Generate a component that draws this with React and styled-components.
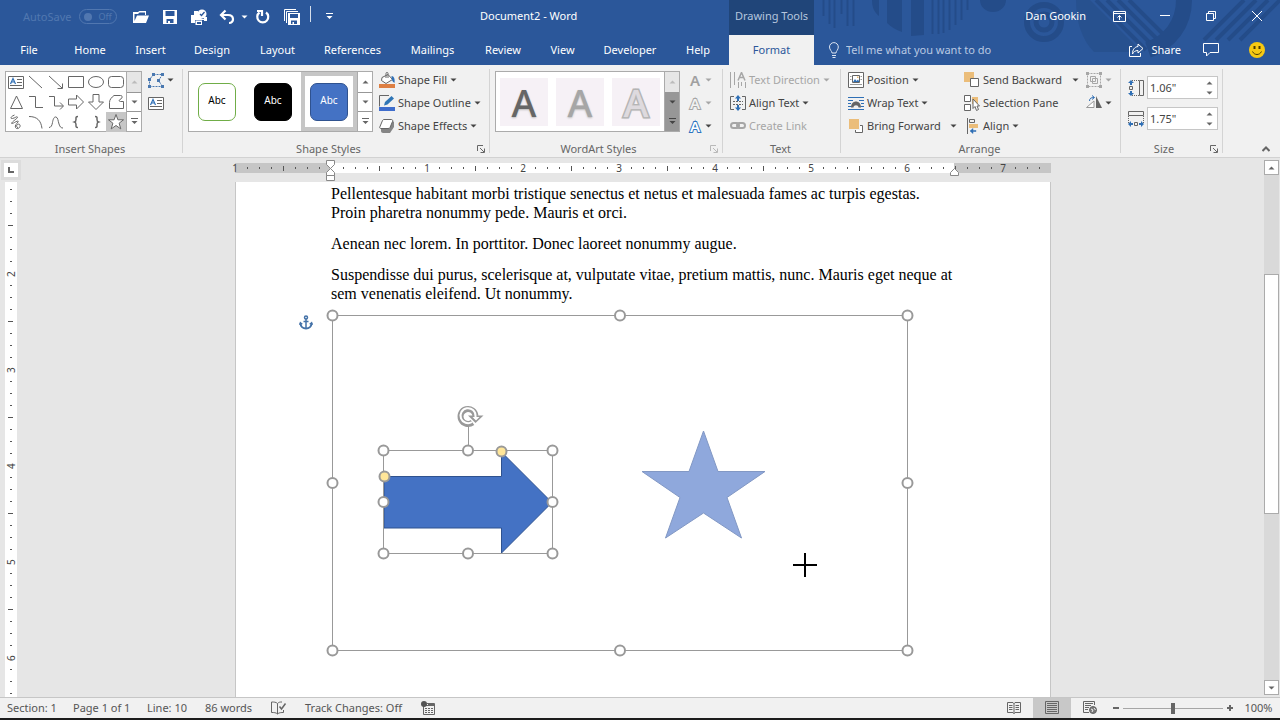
import React from 'react';
import styled, {createGlobalStyle, css} from 'styled-components';

const GlobalStyle = createGlobalStyle`
  * {
    box-sizing: border-box;
  }

  body {
    margin: 0;
    font-family: 'Noto Sans', 'Open Sans', sans-serif;
    font-size: 11px;
    line-height: 16px;
    color: #444;
  }

  button,
  input {
    font: inherit;
    color: inherit;
  }

  button {
    margin: 0;
    padding: 0;
    border: none;
    background: none;
  }

  svg {
    display: block;
    flex: none;
  }
`;

const Window = styled.div`
  display: flex;
  flex-direction: column;
  height: 100vh;
  overflow: hidden;
  background: #e6e6e6;
`;

/* ---------- header ---------- */

const Header = styled.header`
  position: relative;
  flex: none;
  background: #2b579a;
  color: #fff;
`;

const Pattern = styled.svg`
  position: absolute;
  top: 0;
  right: 0;
`;

const TitleBar = styled.div`
  position: relative;
  display: flex;
  height: 35px;
`;

const QuickAccess = styled.div`
  display: flex;
  align-items: center;
  flex: none;
  width: 452px;
  height: 33px;
  padding-left: 23px;
`;

const AutoSave = styled.label`
  display: flex;
  align-items: center;
  gap: 8px;
  width: 103px;
  color: #5177b0;
`;

const Toggle = styled.button`
  display: flex;
  align-items: center;
  gap: 6px;
  width: 38px;
  height: 15px;
  padding-left: 4px;
  border: 1px solid #5177b0;
  border-radius: 8px;
  font-size: 9px;
  line-height: 12px;

  &::before {
    content: '';
    width: 8px;
    height: 8px;
    border-radius: 50%;
    background: #5177b0;
  }
`;

const QuickButton = styled.button`
  display: flex;
  align-items: center;
  justify-content: center;
  width: ${(p) => p.$width || 29}px;
  height: 24px;
`;

const Divider = styled.span`
  width: 1px;
  height: 16px;
  margin: 0 7px 6px 4px;
  background: #d5deeb;
`;

const Title = styled.h1`
  flex: none;
  width: 277px;
  margin: 0;
  padding: 8px 0 0 28px;
  font-size: 11px;
  font-weight: 400;
`;

const ContextLabel = styled.div`
  flex: none;
  width: 85px;
  padding-top: 8px;
  background: #204579;
  color: #b5c5de;
  text-align: center;
`;

const WindowControls = styled.div`
  display: flex;
  margin-left: auto;
  height: 32px;
`;

const UserName = styled.button`
  padding-right: 10px;
`;

const WindowButton = styled.button`
  display: flex;
  align-items: center;
  justify-content: center;
  width: 46px;
`;

const TabBar = styled.nav`
  position: relative;
  display: flex;
  height: 30px;
`;

const Tab = styled.button`
  flex: none;
  width: ${(p) => p.$width}px;
  ${(p) =>
    p.$active &&
    css`
      margin-left: 4px;
      background: #f1f1f1;
      color: #2b579a;
    `}
`;

const TellMe = styled.label`
  display: flex;
  align-items: center;
  gap: 4px;
  margin-left: 12px;
`;

const TellMeInput = styled.input`
  width: 180px;
  padding: 0;
  border: none;
  outline: none;
  background: none;

  &::placeholder {
    color: #b9c9e2;
    opacity: 1;
  }
`;

const TabActions = styled.div`
  display: flex;
  align-items: center;
  gap: 22px;
  margin-left: auto;
  padding-right: 15px;
`;

const Action = styled.button`
  display: flex;
  align-items: center;
  gap: 7px;
  margin-left: ${(p) => (p.$spaced ? 8 : 0)}px;
`;

/* ---------- ribbon ---------- */

const Ribbon = styled.div`
  display: flex;
  flex: none;
  height: 93px;
  border-bottom: 1px solid #d2d2d2;
  background: #f1f1f1;
`;

const Group = styled.section`
  position: relative;
  display: flex;
  flex-direction: column;
  flex: none;
  width: ${(p) => p.$width}px;

  &::after {
    content: '';
    position: absolute;
    top: 4px;
    right: 0;
    width: 1px;
    height: 84px;
    background: #d4d4d4;
  }
`;

const GroupBody = styled.div`
  display: flex;
  flex: 1;
  padding-left: ${(p) => p.$left || 5}px;
`;

const GroupFooter = styled.div`
  display: flex;
  align-items: center;
  height: 16px;
  padding-right: 3px;
  color: #666;
`;

const GroupLabel = styled.h2`
  flex: 1;
  margin: 0;
  font-size: 11px;
  font-weight: 400;
  text-align: center;
`;

const Launcher = styled.button`
  display: flex;
  align-items: center;
  justify-content: center;
  width: 13px;
  height: 16px;
  opacity: ${(p) => (p.disabled ? 0.4 : 1)};
`;

const Gallery = styled.div`
  display: flex;
  flex: none;
  height: 61px;
  margin-top: 6px;
  border: 1px solid #ababab;
  background: #fff;
`;

const ShapeGrid = styled.div`
  display: grid;
  grid-template-columns: repeat(6, 20px);
  grid-auto-rows: 20px;
`;

const ShapeCell = styled.button`
  display: flex;
  align-items: center;
  justify-content: center;
  background: ${(p) => (p.$active ? '#c6c6c6' : 'none')};
`;

const ScrollColumn = styled.div`
  display: grid;
  grid-template-rows: repeat(3, 1fr);
  width: 15px;
  border-left: 1px solid #ababab;
`;

const ScrollStep = styled.button`
  display: flex;
  align-items: center;
  justify-content: center;
  background: ${(p) => (p.disabled ? '#e6e6e6' : p.$dark ? '#979797' : '#fff')};
  color: ${(p) => (p.disabled ? '#bbb' : p.$dark ? '#444' : '#666')};

  & + & {
    border-top: 1px solid ${(p) => (p.$dark ? '#979797' : '#ababab')};
  }
`;

const StyleCell = styled.button`
  display: flex;
  align-items: center;
  justify-content: center;
  width: 56px;
  border: 4px solid ${(p) => (p.$active ? '#c6c6c6' : 'transparent')};
`;

const StyleSwatch = styled.span`
  width: 38px;
  height: 38px;
  padding-top: 8px;
  border: 1px solid ${(p) => p.$border};
  border-radius: 7px;
  background: ${(p) => p.$fill};
  color: ${(p) => p.$ink};
  font-size: 10px;
`;

const WordArtTile = styled.span`
  display: flex;
  align-items: center;
  justify-content: center;
  width: 48px;
  height: 48px;
  background: #f6f1f6;
  color: ${(p) => p.$ink};
  font-size: 38px;
  font-weight: 500;
  line-height: 48px;
  text-shadow: 0 1px 2px #bbb;
  -webkit-text-stroke: ${(p) => (p.$outline ? '3px #b4b4b4' : '0')};
  paint-order: stroke fill;
`;

const Column = styled.div`
  display: flex;
  flex-direction: column;
  flex: none;
  width: ${(p) => p.$width || 'auto'};
  padding-top: 3px;
  margin-left: ${(p) => p.$left || 0}px;
`;

const Command = styled.button`
  display: flex;
  align-items: center;
  gap: 3px;
  height: 23px;
  white-space: nowrap;
  color: ${(p) => (p.disabled ? '#a6a6a6' : '#444')};

  svg:last-child {
    margin-left: ${(p) => (p.$split ? 'auto' : '0')};
  }
`;

const LetterIcon = styled.span`
  width: 14px;
  font-size: 15px;
  font-weight: 600;
  line-height: 20px;
  color: ${(p) => p.$ink};
  -webkit-text-stroke: ${(p) => (p.$edge ? `2px ${p.$edge}` : '0')};
  paint-order: stroke fill;
`;

const SizeField = styled.label`
  display: flex;
  align-items: center;
  gap: 3px;
  height: 23px;
  margin-top: 8px;
`;

const Spinner = styled.span`
  display: flex;
  align-items: center;
  width: 71px;
  height: 23px;
  border: 1px solid #c6c6c6;
  background: #fff;
`;

const SpinnerInput = styled.input`
  flex: 1;
  min-width: 0;
  padding: 0 0 0 2px;
  border: none;
  outline: none;
  background: none;
`;

const SpinnerButtons = styled.span`
  display: flex;
  flex-direction: column;
  gap: 2px;
  width: 15px;
`;

const SpinnerButton = styled.button`
  display: flex;
  align-items: center;
  justify-content: center;
  height: 8px;
  color: #666;
`;

const Collapse = styled.button`
  align-self: flex-end;
  margin-left: auto;
  padding: 0 10px 4px;
`;

/* ---------- document area ---------- */

const Workspace = styled.main`
  display: grid;
  grid-template-columns: 22px minmax(0, 1fr) 16px;
  grid-template-rows: minmax(0, 1fr);
  flex: 1;
  min-height: 0;
`;

const LeftGutter = styled.div`
  display: flex;
  flex-direction: column;
  overflow: hidden;
  padding-left: 5px;
`;

const TabSelector = styled.button`
  display: flex;
  align-items: center;
  justify-content: center;
  flex: none;
  width: 14px;
  height: 14px;
  margin: 5px 0 5px -1px;
  background: #fff;
  box-shadow: 0 0 0 3px #dcdcdc;
`;

const VerticalRuler = styled.div`
  flex: 1;
  min-height: 0;
  width: 12px;
  padding-top: 2px;
  background: #fff;
`;

const Tick = styled.span`
  display: flex;
  align-items: center;
  justify-content: center;
  flex: none;
  width: 12px;
  height: 12px;
  font-size: 10px;
  line-height: 12px;
  color: #444;

  ${(p) =>
    p.$vertical &&
    css`
      writing-mode: vertical-rl;
      transform: rotate(180deg);
    `}

  &::before {
    content: ${(p) => (p.$kind === 'number' ? 'none' : "''")};
    width: ${(p) => (p.$vertical ? (p.$kind === 'half' ? 5 : 2) : 1)}px;
    height: ${(p) => (p.$vertical ? 1 : p.$kind === 'half' ? 5 : 2)}px;
    background: #555;
  }
`;

const Center = styled.div`
  display: flex;
  flex-direction: column;
  align-items: center;
  overflow: hidden;
`;

const HorizontalRuler = styled.div`
  position: relative;
  display: flex;
  align-items: center;
  flex: none;
  width: 816px;
  height: 10px;
  margin: 5px 0 9px;
  background: linear-gradient(
    to right,
    #c6c6c6 96px,
    #fff 96px,
    #fff 719px,
    #c6c6c6 719px
  );
`;

const Ticks = styled.div`
  display: flex;
  margin-left: -6px;
`;

const Indent = styled.svg`
  position: absolute;
  top: ${(p) => p.$top}px;
  left: ${(p) => p.$left}px;
`;

const Page = styled.article`
  flex: 1;
  width: 816px;
  padding: 2px 95px 0;
  border: 1px solid #c6c6c6;
  border-width: 0 1px;
  background: #fff;
  color: #000;
  font-family: 'Liberation Serif', 'Times New Roman', serif;
  font-size: 16px;
  line-height: 19px;
`;

const Paragraph = styled.p`
  margin: 0 0 12px;
`;

const CanvasFrame = styled.div`
  position: relative;
  margin-left: 1px;
`;

const Anchor = styled.svg`
  position: absolute;
  top: 0;
  left: -33px;
`;

const Drawing = styled.svg`
  overflow: visible;
`;

const Scrollbar = styled.div`
  display: flex;
  flex-direction: column;
  margin: 2px 1px 2px 0;
  background: #d9d9d9;
`;

const ScrollArrow = styled.button`
  display: flex;
  align-items: center;
  justify-content: center;
  flex: none;
  height: 15px;
  border: 1px solid #ababab;
  background: #fff;
  color: #666;
`;

const ScrollTrack = styled.div`
  flex: 1;
  padding-top: 99px;
`;

const ScrollThumb = styled.div`
  height: 59%;
  border: 1px solid #ababab;
  background: #fff;
`;

/* ---------- status bar ---------- */

const StatusBar = styled.footer`
  display: flex;
  align-items: center;
  flex: none;
  height: 23px;
  padding-left: 7px;
  border-top: 1px solid #c6c6c6;
  border-bottom: 2px solid #1c1c1c;
  background: #f1f1f1;
  color: #555;
`;

const StatusItem = styled.button`
  flex: none;
  width: ${(p) => p.$width}px;
  text-align: left;
`;

const StatusRight = styled.div`
  display: flex;
  align-items: center;
  height: 100%;
  margin-left: auto;
`;

const ViewButton = styled.button`
  display: flex;
  align-items: center;
  justify-content: center;
  width: 38px;
  height: 100%;
  background: ${(p) => (p.$active ? '#c8c8c8' : 'none')};
`;

const ZoomButton = styled.button`
  display: flex;
  align-items: center;
  justify-content: center;
  width: 14px;
  height: 16px;
`;

const ZoomSlider = styled.input`
  appearance: none;
  width: 100px;
  height: 12px;
  margin: 0;
  background: linear-gradient(#a6a6a6, #a6a6a6) center / 100% 1px no-repeat;

  &::-webkit-slider-thumb {
    appearance: none;
    width: 4px;
    height: 11px;
    background: #666;
  }
`;

const ZoomValue = styled.button`
  width: 43px;
`;

/* ---------- icons ---------- */

const Icon = ({size = 16, children, ...rest}) => (
  <svg
    width={size}
    height={size}
    viewBox={`0 0 ${size} ${size}`}
    fill="none"
    stroke="#666"
    aria-hidden="true"
    {...rest}
  >
    {children}
  </svg>
);

const Caret = ({up}) => (
  <svg width="7" height="4" viewBox="0 0 7 4" aria-hidden="true">
    <path d={up ? 'M0.5 3.5h6L3.5 0.5z' : 'M0.5 0.5h6L3.5 3.5z'} fill="currentColor" />
  </svg>
);

const MoreCaret = () => (
  <svg width="9" height="7" viewBox="0 0 9 7" aria-hidden="true">
    <path d="M1 0h7v1h-7zM1.500 3h6L4.500 6z" fill="currentColor" />
  </svg>
);

const textBoxIcon = (
  <>
    <path d="M0.5 2.5h15v12H0.5z" fill="#fff" />
    <path d="M9 5.5h5M9 8.5h5M2 11.5h12" />
    <path d="M2.5 10L5 4.5L7.5 10M3.5 8h3" stroke="#2f6fb5" strokeWidth="1.2" />
  </>
);

const shapes = [
  ['Text Box', textBoxIcon],
  ['Line', <path d="M1 2l13 12" />],
  ['Line Arrow', <path d="M1 2l13 12M14.5 9.5v5h-5" />],
  ['Rectangle', <path d="M0.5 2.5h15v11H0.5z" />],
  ['Oval', <ellipse cx="8" cy="8" rx="7.5" ry="5.5" />],
  ['Rounded Rectangle', <rect x="0.5" y="2.5" width="15" height="11" rx="3" />],
  ['Triangle', <path d="M8.5 2L14.5 14.5H2.5z" />],
  ['Elbow Connector', <path d="M1 2.5h6.500v11H15" />],
  ['Elbow Arrow', <path d="M1 2.5h5.500v9.500H15M12 8.5l3.500 3.500l-3.500 3.500" />],
  ['Right Arrow', <path d="M0.5 5h8V1l7 7l-7 7v-4h-8z" />],
  ['Down Arrow', <path d="M5 0.500h6v7.500h4.500L8 15.500L0.500 8H5z" />],
  ['Freeform', <path d="M6 1.500h6.500c2.500 0 2 3-.5 4c-1.500 1-1 2 .5 2h3v7h-14V8.500c0-3 2-5 4.500-7z" />],
  ['Scribble', <path d="M6.500 1c-4 1.500-4.500 4-2 3.500S9 2 9.500 3s-3 3-5 5s-.5 2 2 .5S11 6.500 10 8s-3.500 3.500-2.500 5.500s4 1 4.500-1s-1-3-2.500-2s-1 2.500 .5 3.500" />],
  ['Curve', <path d="M1 2.500c8 0 12 4 13 12" />],
  ['Wave', <path d="M1 13.500c2 0 3-2 3.500-5S6 2.500 8 3s2 4 3 7s2 4 4 4" />],
  ['Left Brace', <path d="M10 2.500C7.500 2.500 8 4 8 5.500s0 2-1.500 2.500C8 8.500 8 9 8 10.500s-.5 3 2 3" strokeWidth="1.500" />],
  ['Right Brace', <path d="M7 2.500c2.500 0 2 1.500 2 3s0 2 1.500 2.500C9 8.500 9 9 9 10.500s.5 3-2 3" strokeWidth="1.500" />],
  ['Star', <path d="M8 0.500l1.900 5.300h5.600l-4.400 3.400l1.700 5.700L8 11.500l-4.800 3.400l1.700-5.700L0.500 5.800h5.600z" fill="#fff" />],
];

const styles = [
  {fill: '#fff', border: '#70ad47', ink: '#000'},
  {fill: '#000', border: '#000', ink: '#fff'},
  {fill: '#4472c4', border: '#2f528f', ink: '#fff', active: true},
];

const tabs = [
  ['File', 58],
  ['Home', 64],
  ['Insert', 57],
  ['Design', 66],
  ['Layout', 65],
  ['References', 85],
  ['Mailings', 75],
  ['Review', 66],
  ['View', 53],
  ['Developer', 82],
  ['Help', 54],
  ['Format', 85],
];

const FillIcon = () => (
  <Icon>
    <path d="M3 5.500l6-3l4.500 5l-6.500 4L2.500 8.500zM7 6V1.500c0-1.500 2-1.500 2 0V6" fill="#fff" />
    <path d="M12.500 4c2.500 0 3.500 3 3 7c-2-1-3-3-3-7z" fill="#2f6fb5" stroke="none" />
    <path d="M0 12h16v4H0z" fill="#dd7f43" stroke="none" />
  </Icon>
);

const OutlineIcon = () => (
  <Icon>
    <path d="M10 0.500H0.500v11" />
    <path d="M5 10.500l1-3.500l6.500-6L15 3.500L8.500 9.500z" fill="#2f75b5" stroke="none" />
    <path d="M0 12h16v4H0z" fill="#3f6dcc" stroke="none" />
  </Icon>
);

const EffectsIcon = () => (
  <Icon>
    <path d="M2 11v2c0 1 1 2 2 2h7l4-6V4l-2-2z" fill="#858585" stroke="none" />
    <path d="M5 1.500h7.500c1 0 1.500 1 1 2l-2.500 6c-.3.700-1 1-2 1H1.800c-1 0-1.300-.7-1-1.500l2.500-6c.3-1 1-1.500 1.700-1.500z" fill="#fff" />
  </Icon>
);

const TextDirectionIcon = () => (
  <Icon stroke="#a6a6a6">
    <path d="M0.500 0v16M4.500 0v13M8.500 10v6M11.500 10v4M15.500 10v6" />
    <path d="M8 8.500l3.500-8L15 8.500M9.500 5.500h4" strokeWidth="1.500" />
  </Icon>
);

const AlignTextIcon = () => (
  <Icon>
    <path d="M4 1.500H0.500v13H4M12 1.500h3.500v13H12" />
    <path d="M3 6.500h10M3 9.500h10" strokeDasharray="2 1" />
    <path d="M8 0l3 3.500H9V6H7V3.500H5zM8 16l3-3.500H9V10H7v2.500H5z" fill="#2f6fb5" stroke="none" />
  </Icon>
);

const LinkIcon = () => (
  <Icon stroke="#a6a6a6" strokeWidth="2">
    <rect x="1" y="5" width="8" height="5" rx="2.500" />
    <rect x="7" y="5" width="8" height="5" rx="2.500" />
  </Icon>
);

const PositionIcon = () => (
  <Icon>
    <path d="M0.500 0.500h15v15H0.500z" fill="#fff" />
    <path d="M4.500 3.500h7v7h-7z" />
    <path d="M2 4.500h1.500M2 7.500h1.500M12.500 4.500H14M12.500 7.500H14M2 12.500h12" stroke="#999" />
    <path d="M5 10l2-3l1.500 2L10 7.500l1.500 2.500z" fill="#2f6fb5" stroke="none" />
    <path d="M9 4.500h1.500V6H9z" fill="#e8b86d" stroke="none" />
  </Icon>
);

const WrapIcon = () => (
  <Icon>
    <path d="M0 2.500h16M0 5.500h5M11 5.500h5M0 8.500h3M13 8.500h3M0 11.500h3M13 11.500h3M0 14.500h16" stroke="#2f6fb5" />
    <path d="M3 12.500c0-8 10-8 10 0h-2.500c0-3-5-3-5 0z" fill="#666" stroke="none" />
  </Icon>
);

const ForwardIcon = () => (
  <Icon>
    <path d="M7.500 7.500h7v7h-7z" fill="#fff" />
    <path d="M0.500 0.500h11v11h-11z" fill="#ebbd7a" stroke="#f1f1f1" />
  </Icon>
);

const BackwardIcon = () => (
  <Icon>
    <path d="M0 0h10v10H0z" fill="#ebbd7a" stroke="none" />
    <path d="M6.500 6.500h8v8h-8z" fill="#fff" />
  </Icon>
);

const SelectionIcon = () => (
  <Icon>
    <path d="M0.500 0.500h6v6h-6zM0.500 9.500h6v6h-6z" fill="#fff" />
    <path d="M8 2h6v7H8z" fill="#ebbd7a" stroke="none" />
    <path d="M9 4v9.500l2-2l1.500 4l2-1l-1.500-3.500h2.500z" fill="#fff" />
  </Icon>
);

const AlignIcon = () => (
  <Icon>
    <path d="M3.500 0v16M5.500 1.500h5v3h-5z" />
    <path d="M5 6h9v4H5z" fill="#ebbd7a" stroke="none" />
    <path d="M6 13l3-2.500v2h3v1H9v2z" fill="#2f6fb5" stroke="#2f6fb5" strokeWidth=".5" />
  </Icon>
);

const GroupIcon = () => (
  <Icon stroke="#a6a6a6">
    <path d="M1.500 1.500h13v13h-13z" strokeDasharray="2 1" />
    <path d="M4.500 4.500h5v5h-5zM6.500 6.500h5v5h-5z" />
    <path d="M0 0h3v3H0zM13 0h3v3h-3zM0 13h3v3H0zM13 13h3v3h-3z" fill="#a6a6a6" stroke="none" />
  </Icon>
);

const RotateIcon = () => (
  <Icon>
    <path d="M0.500 12.500L8 6v6.500z" stroke="#999" fill="#fff" />
    <path d="M10 1v12h6z" fill="#666" stroke="none" />
    <path d="M3.500 6c0-3 2-3.500 4.500-3.500M6 0.500l2.500 2L6 4.500" stroke="#2f6fb5" />
  </Icon>
);

const HeightIcon = () => (
  <Icon>
    <path d="M11.500 0.500h4v15h-4z" />
    <path d="M4 0.500h7M4 15.500h7" strokeDasharray="1 1" />
    <path d="M1.500 6.500h3v3h-3z" />
    <path d="M3 0l3 3H4v2H2V3H0zM3 16l3-3H4v-2H2v2H0z" fill="#2f6fb5" stroke="none" />
  </Icon>
);

const WidthIcon = () => (
  <Icon>
    <path d="M0.500 0.500h15v4H0.500z" />
    <path d="M0.500 5v7M15.500 5v7" strokeDasharray="1 1" />
    <path d="M6.500 11.500h3v3h-3z" />
    <path d="M0 13l3-3v2h2v2H3v2zM16 13l-3-3v2h-2v2h2v2z" fill="#2f6fb5" stroke="none" />
  </Icon>
);

const EditShapeIcon = () => (
  <Icon stroke="#4a78b0">
    <path d="M5.500 2.500h9M14.500 2.500l-4 6l4 6M1.500 14.500h13M1.500 14.500v-7l4-5" strokeDasharray="2 1" />
    <path d="M4 1h3v3H4zM13 1h3v3h-3zM0 6h3v3H0zM9 7h3v3H9zM0 13h3v3H0zM13 13h3v3h-3z" fill="#4a78b0" stroke="none" />
  </Icon>
);

const LauncherIcon = () => (
  <Icon size={8}>
    <path d="M0.500 6V0.500H6M3 3l4 4M7.500 3.500v4h-4" />
  </Icon>
);

const HeaderPattern = () => (
  <Pattern width="480" height="65" viewBox="800 0 480 65" fill="none" stroke="#244c89" aria-hidden="true">
    <path d="M823.500 0v16M829.500 0v24M834.500 0v28M841.500 0v14M847.500 0v26M853.500 0v26" strokeWidth="2" />
    <path d="M872 0h7v16c-5-4-7-9-7-16zM887 0h15v32c-6-2-11-5-15-9zM911 0h13v35l-13 1z" fill="#244c89" stroke="none" />
    <path d="M932.500 0v34M938.500 0v34M943.500 0v33M949.500 0v30M955.500 0v25M961.500 0v20M967.500 0v10" strokeWidth="2" />
    <path d="M980 0a13 12 0 0 0 26 0z" fill="#244c89" stroke="none" />
    <circle cx="1044" cy="22" r="17" strokeWidth="6" />
    <circle cx="1044" cy="22" r="8" strokeWidth="5" />
    <path d="M1076 0h14l52 52h-48c-12-12-18-30-18-52z" fill="#244c89" stroke="none" opacity=".6" />
    <path d="M1096 0l50 50M1107 0l46 46M1118 0l41 41M1129 0l34 34" strokeWidth="4" />
    <path d="M1184 0c0 24-14 42-36 50" strokeWidth="16" />
    <path d="M1204 40l40-40M1216 40l40-40M1228 40l40-40M1240 40l40-40" strokeWidth="4" />
  </Pattern>
);

/* ---------- parts ---------- */

const GallerySteps = ({dark}) => (
  <ScrollColumn>
    <ScrollStep disabled aria-label="Previous row"><Caret up /></ScrollStep>
    <ScrollStep $dark={dark} aria-label="Next row"><Caret /></ScrollStep>
    <ScrollStep $dark={dark} aria-label="More"><MoreCaret /></ScrollStep>
  </ScrollColumn>
);

const Footer = ({label, launcher, disabled}) => (
  <GroupFooter>
    <GroupLabel>{label}</GroupLabel>
    {launcher && (
      <Launcher disabled={disabled} aria-label={`${label} settings`}>
        <LauncherIcon />
      </Launcher>
    )}
  </GroupFooter>
);

const SizeInput = ({id, label, value, icon}) => (
  <SizeField htmlFor={id} aria-label={label}>
    {icon}
    <Spinner>
      <SpinnerInput id={id} aria-label={label} defaultValue={value} />
      <SpinnerButtons>
        <SpinnerButton aria-label="Increase"><Caret up /></SpinnerButton>
        <SpinnerButton aria-label="Decrease"><Caret /></SpinnerButton>
      </SpinnerButtons>
    </Spinner>
  </SizeField>
);

// index 0 of the horizontal ruler is the page edge, one inch left of the margin
const horizontalTicks = Array.from({length: 68}, (_, i) => {
  if (i === 8) return {kind: 'number', text: ''};
  if (i % 8 === 0) return {kind: 'number', text: Math.abs(i / 8 - 1)};
  return {kind: i % 4 === 0 ? 'half' : 'dot'};
});

const verticalTicks = Array.from({length: 43}, (_, i) => {
  if (i % 8 === 7) return {kind: 'number', text: (i + 1) / 8 + 1};
  return {kind: i % 8 === 3 ? 'half' : 'dot'};
});

const Handle = ({x, y, fill = '#fff'}) => (
  <circle cx={x} cy={y} r="5" fill={fill} stroke="#999" strokeWidth="2" />
);

const Handles = ({x, y, w, h}) => (
  <>
    {[0, 0.5, 1].map((v) =>
      [0, 0.5, 1].map((u) =>
        u === 0.5 && v === 0.5 ? null : (
          <Handle key={`${u}-${v}`} x={x + w * u} y={y + h * v} />
        )
      )
    )}
  </>
);

const DrawingCanvas = () => (
  <CanvasFrame>
    <Anchor width="14" height="15" viewBox="0 0 14 15" fill="none" stroke="#4472a8" strokeWidth="1.500">
      <circle cx="7" cy="2.500" r="1.500" />
      <path d="M7 4v9M4.500 6.500h5" />
      <path d="M1.500 8c0 3.500 2.500 5.500 5.500 5.500s5.500-2 5.500-5.500" strokeWidth="2" />
      <path d="M0 10l1-3.500l3 2.500zM14 10l-1-3.500L10 9z" fill="#4472a8" stroke="none" />
    </Anchor>
    <Drawing width="576" height="336" viewBox="0 0 576 336" fill="none">
      <rect x="0.5" y="0.5" width="575" height="335" stroke="#999" />
      <Handles x={0.5} y={0.5} w={575} h={335} />

      <path
        d="M371.500 116l14.500 40.500h47l-38 26l14.500 40.500l-38-25l-38 25l14.500-40.500l-38-26h47z"
        fill="#8fa8dc"
        stroke="#8298c4"
      />

      <path
        d="M52 161.500h117.500V137L220 187.500L169.500 238v-25H52z"
        fill="#4472c4"
        stroke="#2f528f"
      />
      <rect x="51.500" y="135.500" width="169" height="103" stroke="#999" />
      <path d="M136.500 110v25" stroke="#999" />
      <Handles x={51.5} y={135.5} w={169} h={103} />
      <Handle x={52.5} y={161.5} fill="#ffe699" />
      <Handle x={169.5} y={136.5} fill="#ffe699" />

      {/* rotation handle */}
      <path d="M140.500 107.500a7.500 7.500 0 1 1 3-6.500" stroke="#999" strokeWidth="6" />
      <path d="M136 100.500h15.500l-8 7.500z" fill="#999" />
      <path d="M140 107a7.500 7.500 0 1 1 3.500-6v3" stroke="#fff" strokeWidth="2" />
      <path d="M140.500 102h7l-3.500 3.500z" fill="#fff" />

      <path d="M461 250h24M473 238v24" stroke="#000" strokeWidth="2" />
    </Drawing>
  </CanvasFrame>
);

export default function App() {
  return (
    <Window>
      <GlobalStyle />

      <Header>
        <HeaderPattern />
        <TitleBar>
          <QuickAccess>
            <AutoSave htmlFor="autosave">
              AutoSave
              <Toggle id="autosave" role="switch" aria-checked="false">Off</Toggle>
            </AutoSave>
            <QuickButton aria-label="Open">
              <Icon fill="#fff" stroke="none">
                <path d="M0 14V3h5l1.500-1H13v4h-1V3.500H6.500L5 5H1.500v7L4 6.500h12L13 14z" />
              </Icon>
            </QuickButton>
            <QuickButton aria-label="Save">
              <Icon size={14} fill="#fff" stroke="none">
                <path d="M0 0h14v14H0zM2.500 1v5h9V1zM3.500 9v4H5v-2h2v2h3.500V9z" fillRule="evenodd" />
              </Icon>
            </QuickButton>
            <QuickButton aria-label="Quick Print">
              <Icon fill="#fff" stroke="none">
                <path d="M0 6h3V2h4v4h1l3 4h5v2h-3v-1H4v3H0zM4.500 11.500H11V16H4.500zM13 8h3v4h-3z" />
                <circle cx="11" cy="5" r="4.500" />
                <path d="M9 5l1.500 1.500L13.500 3" fill="none" stroke="#2b579a" strokeWidth="1.300" />
                <path d="M6 13h4v2H6z" fill="#2b579a" />
              </Icon>
            </QuickButton>
            <QuickButton aria-label="Undo" $width={28}>
              <Icon stroke="#fff" strokeWidth="2.200">
                <path d="M2 6h7c6.500 0 6.500 8 1 8M6.500 1.500L2 6l4.500 4.500" />
              </Icon>
            </QuickButton>
            <QuickButton aria-label="Undo history" $width={7}><Caret /></QuickButton>
            <QuickButton aria-label="Repeat">
              <Icon stroke="#fff" strokeWidth="2.200">
                <path d="M11 3.500A5.500 5.500 0 1 1 4.500 3.500M2 2h5v5" />
              </Icon>
            </QuickButton>
            <QuickButton aria-label="Save All">
              <Icon stroke="#fff">
                <path d="M0.500 12V0.500H12M2.500 14V2.500H14" />
                <path d="M4 4h12v12H4zM6 5v4h8V5zM7 11.500V15h1.500v-2H10v2h3v-3.500z" fill="#fff" fillRule="evenodd" stroke="none" />
              </Icon>
            </QuickButton>
            <Divider />
            <QuickButton aria-label="Customize" $width={22}><MoreCaret /></QuickButton>
          </QuickAccess>
          <Title>Document2 - Word</Title>
          <ContextLabel>Drawing Tools</ContextLabel>
          <WindowControls>
            <UserName>Dan Gookin</UserName>
            <WindowButton aria-label="Ribbon Display Options">
              <Icon size={13} stroke="#fff">
                <path d="M0.500 1.500h12v10H0.500zM0.500 3.500h12M6.500 10V5.500M4.500 7.500l2-2l2 2" />
              </Icon>
            </WindowButton>
            <WindowButton aria-label="Minimize">
              <Icon size={10} stroke="#fff"><path d="M0 4.500h10" /></Icon>
            </WindowButton>
            <WindowButton aria-label="Restore">
              <Icon size={10} stroke="#fff"><path d="M0.500 2.500h7v7h-7zM2.500 2V0.500h7v7H8" /></Icon>
            </WindowButton>
            <WindowButton aria-label="Close">
              <Icon size={12} stroke="#fff"><path d="M1 1l10 10M11 1L1 11" /></Icon>
            </WindowButton>
          </WindowControls>
        </TitleBar>

        <TabBar>
          {tabs.map(([name, width]) => (
            <Tab key={name} $width={width} $active={name === 'Format'}>{name}</Tab>
          ))}
          <TellMe htmlFor="tell-me">
            <Icon stroke="#dde5f2">
              <path d="M6 11c0-2-2.500-3-2.500-6a4.300 4.300 0 0 1 8.800 0c0 3-2.300 4-2.300 6zM6 13.500h4M6.500 15.500h3" />
            </Icon>
            <TellMeInput id="tell-me" placeholder="Tell me what you want to do" />
          </TellMe>
          <TabActions>
            <Action>
              <Icon stroke="#fff">
                <path d="M4 4.500H1.500v10h11V11M10 2l5 4.500l-5 4.500V8.500C7 8.500 5.500 10 4.500 12C4.500 7.500 6.500 5 10 4.500z" />
              </Icon>
              Share
            </Action>
            <Action aria-label="Comments">
              <Icon stroke="#fff">
                <path d="M0.500 1.500h15v9H7l-3.500 3.500v-3.500h-3z" />
              </Icon>
            </Action>
            <Action $spaced aria-label="Feedback">
              <Icon stroke="#4a3a00">
                <circle cx="8" cy="8" r="8" fill="#f7c912" stroke="none" />
                <path d="M5.500 4v3M10.500 4v3" strokeWidth="2" />
                <path d="M3.500 9.500c2 4 7 4 9 0" />
              </Icon>
            </Action>
          </TabActions>
        </TabBar>
      </Header>

      <Ribbon>
        <Group $width={183}>
          <GroupBody>
            <Gallery>
              <ShapeGrid>
                {shapes.map(([name, drawing]) => (
                  <ShapeCell key={name} aria-label={name} $active={name === 'Star'}>
                    <Icon>{drawing}</Icon>
                  </ShapeCell>
                ))}
              </ShapeGrid>
              <GallerySteps />
            </Gallery>
            <Column $left={6}>
              <Command aria-label="Edit Shape"><EditShapeIcon /><Caret /></Command>
              <Command aria-label="Draw Text Box"><Icon>{textBoxIcon}</Icon></Command>
            </Column>
          </GroupBody>
          <Footer label="Insert Shapes" />
        </Group>

        <Group $width={307}>
          <GroupBody>
            <Gallery>
              {styles.map((s) => (
                <StyleCell key={s.fill} $active={s.active}>
                  <StyleSwatch $fill={s.fill} $border={s.border} $ink={s.ink}>Abc</StyleSwatch>
                </StyleCell>
              ))}
              <ScrollColumn>
                <ScrollStep aria-label="Previous row"><Caret up /></ScrollStep>
                <ScrollStep aria-label="Next row"><Caret /></ScrollStep>
                <ScrollStep aria-label="More"><MoreCaret /></ScrollStep>
              </ScrollColumn>
            </Gallery>
            <Column $left={6}>
              <Command><FillIcon />Shape Fill<Caret /></Command>
              <Command><OutlineIcon />Shape Outline<Caret /></Command>
              <Command><EffectsIcon />Shape Effects<Caret /></Command>
            </Column>
          </GroupBody>
          <Footer label="Shape Styles" launcher />
        </Group>

        <Group $width={233}>
          <GroupBody>
            <Gallery>
              <StyleCell><WordArtTile $ink="#666">A</WordArtTile></StyleCell>
              <StyleCell><WordArtTile $ink="#a6a6a6">A</WordArtTile></StyleCell>
              <StyleCell><WordArtTile $ink="#dedade" $outline>A</WordArtTile></StyleCell>
              <GallerySteps dark />
            </Gallery>
            <Column $left={8}>
              <Command disabled aria-label="Text Fill"><LetterIcon $ink="#a0a0a0">A</LetterIcon><Caret /></Command>
              <Command disabled aria-label="Text Outline"><LetterIcon $ink="#f1f1f1" $edge="#a6a6a6">A</LetterIcon><Caret /></Command>
              <Command aria-label="Text Effects"><LetterIcon $ink="#fff" $edge="#2f75c0">A</LetterIcon><Caret /></Command>
            </Column>
          </GroupBody>
          <Footer label="WordArt Styles" launcher disabled />
        </Group>

        <Group $width={118}>
          <GroupBody $left={7}>
            <Column>
              <Command disabled><TextDirectionIcon />Text Direction<Caret /></Command>
              <Command><AlignTextIcon />Align Text<Caret /></Command>
              <Command disabled><LinkIcon />Create Link</Command>
            </Column>
          </GroupBody>
          <Footer label="Text" />
        </Group>

        <Group $width={280}>
          <GroupBody $left={7}>
            <Column $width="109px">
              <Command><PositionIcon />Position<Caret /></Command>
              <Command><WrapIcon />Wrap Text<Caret /></Command>
              <Command $split><ForwardIcon />Bring Forward<Caret /></Command>
            </Column>
            <Column $left={7} $width="115px">
              <Command $split><BackwardIcon />Send Backward<Caret /></Command>
              <Command><SelectionIcon />Selection Pane</Command>
              <Command><AlignIcon />Align<Caret /></Command>
            </Column>
            <Column $left={7}>
              <Command disabled aria-label="Group"><GroupIcon /><Caret /></Command>
              <Command aria-label="Rotate"><RotateIcon /><Caret /></Command>
            </Column>
          </GroupBody>
          <Footer label="Arrange" />
        </Group>

        <Group $width={102}>
          <GroupBody $left={7}>
            <Column>
              <SizeInput id="height" label="Shape Height" value={'1.06"'} icon={<HeightIcon />} />
              <SizeInput id="width" label="Shape Width" value={'1.75"'} icon={<WidthIcon />} />
            </Column>
          </GroupBody>
          <Footer label="Size" launcher />
        </Group>

        <Collapse aria-label="Collapse the Ribbon">
          <Icon size={8} strokeWidth="2"><path d="M0.500 6L4 2.500L7.500 6" /></Icon>
        </Collapse>
      </Ribbon>

      <Workspace>
        <LeftGutter>
          <TabSelector aria-label="Tab alignment">
            <Icon size={8} strokeWidth="2"><path d="M2 1v5h5" /></Icon>
          </TabSelector>
          <VerticalRuler>
            {verticalTicks.map((t, i) => (
              <Tick key={i} $vertical $kind={t.kind}>{t.text}</Tick>
            ))}
          </VerticalRuler>
        </LeftGutter>

        <Center>
          <HorizontalRuler>
            <Ticks>
              {horizontalTicks.map((t, i) => (
                <Tick key={i} $kind={t.kind}>{t.text}</Tick>
              ))}
            </Ticks>
            <Indent $top={-3} $left={91} width="9" height="22" viewBox="0 0 9 22" fill="#fff" stroke="#888">
              <path d="M0.500 0.500h8v4l-4 4l-4-4zM4.500 8.500l4 4v3h-8v-3zM0.500 15.500h8v5h-8z" />
            </Indent>
            <Indent $top={5} $left={715} width="9" height="9" viewBox="0 0 9 9" fill="#fff" stroke="#888">
              <path d="M4.500 0.500l4 4v3h-8v-3z" />
            </Indent>
          </HorizontalRuler>
          <Page>
            <Paragraph>
              Pellentesque habitant morbi tristique senectus et netus et
              malesuada fames ac turpis egestas. Proin pharetra nonummy pede.
              Mauris et orci.
            </Paragraph>
            <Paragraph>
              Aenean nec lorem. In porttitor. Donec laoreet nonummy augue.
            </Paragraph>
            <Paragraph>
              Suspendisse dui purus, scelerisque at, vulputate vitae, pretium
              mattis, nunc. Mauris eget neque at sem venenatis eleifend. Ut
              nonummy.
            </Paragraph>
            <DrawingCanvas />
          </Page>
        </Center>

        <Scrollbar>
          <ScrollArrow aria-label="Scroll up"><Caret up /></ScrollArrow>
          <ScrollTrack><ScrollThumb /></ScrollTrack>
          <ScrollArrow aria-label="Scroll down"><Caret /></ScrollArrow>
        </Scrollbar>
      </Workspace>

      <StatusBar>
        <StatusItem $width={66}>Section: 1</StatusItem>
        <StatusItem $width={74}>Page 1 of 1</StatusItem>
        <StatusItem $width={58}>Line: 10</StatusItem>
        <StatusItem $width={66}>86 words</StatusItem>
        <StatusItem $width={34} aria-label="Proofing">
          <Icon>
            <path d="M6.500 3.500C5 2 3 2 0.500 2v10.500c2.500 0 4.500 0 6 1.500zM6.500 3.500C8 2 9 2 11 2M6.500 14c1.500-1.500 4-1.500 6-1.500V10" />
            <path d="M8.500 6.500l2 2.500l4-5.500" strokeWidth="1.500" />
          </Icon>
        </StatusItem>
        <StatusItem $width={116}>Track Changes: Off</StatusItem>
        <StatusItem $width={20} aria-label="Record macro">
          <Icon size={14}>
            <path d="M2.500 5v8.500h11v-11H6M3 4.500h10" />
            <path d="M4 7.500h8M4 9.500h8M4 11.500h8" strokeDasharray="2 1" />
            <path d="M7 3h6" strokeWidth="2" />
            <circle cx="3" cy="3" r="3" fill="#555" stroke="none" />
          </Icon>
        </StatusItem>
        <StatusRight>
          <ViewButton aria-label="Read Mode">
            <Icon size={14}>
              <path d="M0.500 1.500h5.500l1 1l1-1h5.500v10H8l-1 1l-1-1H0.500zM7 2v11M2 4.500h3.500M2 6.500h3.500M2 8.500h3.500M8.500 4.500H12M8.500 6.500H12M8.500 8.500H12" />
            </Icon>
          </ViewButton>
          <ViewButton $active aria-label="Print Layout">
            <Icon size={14}>
              <path d="M0.500 0.500h13v12H0.500zM2 2.500h10M2 4.500h10M2 6.500h10M2 8.500h10M2 10.500h10" />
            </Icon>
          </ViewButton>
          <ViewButton aria-label="Web Layout">
            <Icon size={14}>
              <path d="M6 11.500H0.500v-11h11V4M2 2.500h8M2 4.500h6M2 6.500h4M2 8.500h3" />
              <circle cx="10" cy="9" r="3.500" fill="#777" />
              <path d="M8 8l2 1l-1 2M11 7l1.500 2" stroke="#f1f1f1" />
            </Icon>
          </ViewButton>
          <ZoomButton aria-label="Zoom out">
            <Icon size={8} strokeWidth="2"><path d="M1 4h6" /></Icon>
          </ZoomButton>
          <ZoomSlider type="range" min="10" max="190" defaultValue="100" aria-label="Zoom" />
          <ZoomButton aria-label="Zoom in">
            <Icon size={8} strokeWidth="2"><path d="M1 4h6M4 1v6" /></Icon>
          </ZoomButton>
          <ZoomValue>100%</ZoomValue>
        </StatusRight>
      </StatusBar>
    </Window>
  );
}
